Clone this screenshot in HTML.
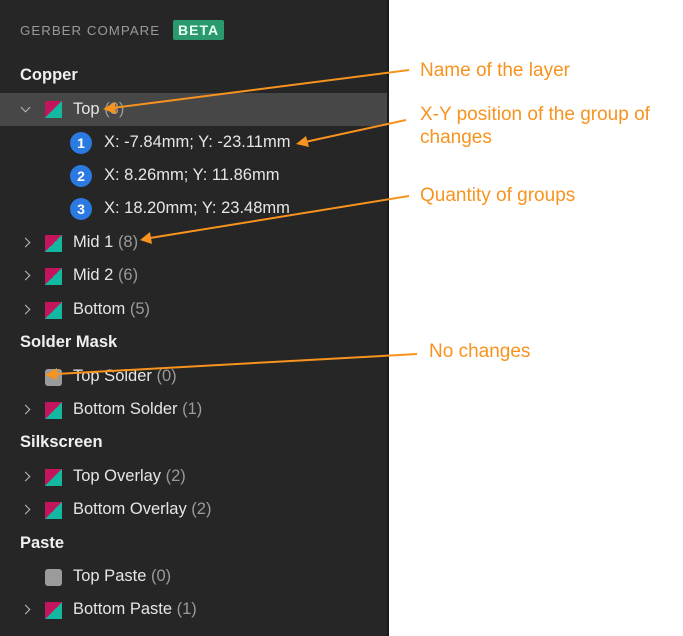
<!DOCTYPE html>
<html><head><meta charset="utf-8"><style>
*{margin:0;padding:0;box-sizing:border-box}
body{width:683px;height:636px;background:#fff;position:relative;overflow:hidden;font-family:"Liberation Sans",sans-serif}
#side{position:absolute;left:0;top:0;width:389px;height:636px;background:#262626;border-right:2px solid #1a1a1a}
.t{position:absolute;white-space:nowrap}
.h{left:20px;color:#f0f0f0;font-size:16.5px;font-weight:bold}
.r{left:73px;color:#e6e6e6;font-size:16.5px}
.r span{color:#9a9a9a}
.ic{position:absolute;left:45px;width:17px;height:17px;background:linear-gradient(135deg,#c4145e 50%,#12b8a0 50%)}
.gr{position:absolute;left:45px;width:17px;height:17px;background:#9b9b9b;border-radius:3px}
.ch{position:absolute;left:22px;width:7px;height:7px;border-right:1.5px solid #bbb;border-bottom:1.5px solid #bbb;transform:rotate(-45deg)}
.num{position:absolute;left:70px;width:22px;height:22px;border-radius:50%;background:#2a7ae2;color:#fff;font-size:14px;font-weight:bold;text-align:center;line-height:22px}
.a{position:absolute;left:420px;color:#f7931e;font-size:19px;line-height:23px}
</style></head><body>
<div id="side">
<div class="t" style="left:20px;top:23px;color:#999;font-size:13.3px;letter-spacing:1px">GERBER COMPARE</div>
<div class="t" style="left:173px;top:20px;background:#2a9a6e;color:#e8fff4;font-size:14px;font-weight:bold;padding:2px 5px;border-radius:2px;letter-spacing:1px">BETA</div>
<div style="position:absolute;left:0;top:93px;width:387px;height:33px;background:#474747"></div>

<div class="t h" style="top:66px">Copper</div>
<div class="ch" style="top:104px;transform:rotate(45deg)"></div><div class="ic" style="top:101px"></div><div class="t r" style="top:100px">Top <span>(3)</span></div>
<div class="num" style="top:132px">1</div><div class="t r" style="left:104px;top:133px">X: -7.84mm; Y: -23.11mm</div>
<div class="num" style="top:165px">2</div><div class="t r" style="left:104px;top:166px">X: 8.26mm; Y: 11.86mm</div>
<div class="num" style="top:198px">3</div><div class="t r" style="left:104px;top:199px">X: 18.20mm; Y: 23.48mm</div>
<div class="ch" style="top:239px"></div><div class="ic" style="top:235px"></div><div class="t r" style="top:233px">Mid 1 <span>(8)</span></div>
<div class="ch" style="top:272px"></div><div class="ic" style="top:268px"></div><div class="t r" style="top:266px">Mid 2 <span>(6)</span></div>
<div class="ch" style="top:306px"></div><div class="ic" style="top:302px"></div><div class="t r" style="top:300px">Bottom <span>(5)</span></div>

<div class="t h" style="top:333px">Solder Mask</div>
<div class="gr" style="top:369px"></div><div class="t r" style="top:367px">Top Solder <span>(0)</span></div>
<div class="ch" style="top:406px"></div><div class="ic" style="top:402px"></div><div class="t r" style="top:400px">Bottom Solder <span>(1)</span></div>

<div class="t h" style="top:433px">Silkscreen</div>
<div class="ch" style="top:473px"></div><div class="ic" style="top:469px"></div><div class="t r" style="top:467px">Top Overlay <span>(2)</span></div>
<div class="ch" style="top:506px"></div><div class="ic" style="top:502px"></div><div class="t r" style="top:500px">Bottom Overlay <span>(2)</span></div>

<div class="t h" style="top:534px">Paste</div>
<div class="gr" style="top:569px"></div><div class="t r" style="top:567px">Top Paste <span>(0)</span></div>
<div class="ch" style="top:606px"></div><div class="ic" style="top:602px"></div><div class="t r" style="top:600px">Bottom Paste <span>(1)</span></div>
</div>

<div class="a" style="top:59px">Name of the layer</div>
<div class="a" style="top:103px">X-Y position of the group of<br>changes</div>
<div class="a" style="top:184px">Quantity of groups</div>
<div class="a" style="left:429px;top:340px">No changes</div>

<svg width="683" height="636" style="position:absolute;left:0;top:0" fill="#f7931e" stroke="#f7931e">
<g stroke-width="2">
<line x1="409" y1="70" x2="112" y2="108"/>
<line x1="406" y1="120" x2="305" y2="142"/>
<line x1="409" y1="196" x2="150" y2="238"/>
<line x1="417" y1="354" x2="56" y2="374"/>
</g>
<g stroke="none">
<polygon points="103,109 115,102 116,114"/>
<polygon points="296,144 306,136 309,147"/>
<polygon points="140,240 150,232 152,244"/>
<polygon points="45,375 57,368 57,380"/>
</g>
</svg>
</body></html>
